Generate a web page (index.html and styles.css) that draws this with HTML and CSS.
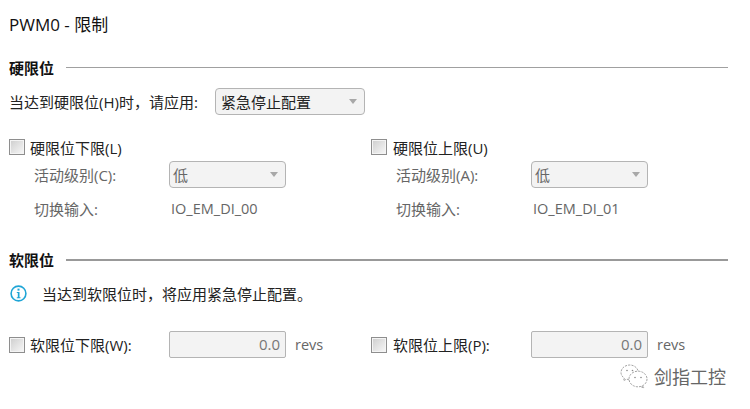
FILE: index.html
```html
<!DOCTYPE html>
<html lang="zh">
<head>
    <meta charset="UTF-8">
    <meta name="viewport" content="width=device-width, initial-scale=1.0">
    <title>PWM0 - 限制</title>
    <link rel="stylesheet" href="styles.css">
</head>
<body>

    <div class="container">
        <h1>PWM0 - 限制</h1>

        <div class="section-head">
            <h2>硬限位</h2>
            <div class="rule"></div>
        </div>
        <div class="apply-row">
            <span class="apply-label">当达到硬限位(H)时，请应用:</span>
            <div class="select select-wide"><span>紧急停止配置</span><i class="arrow"></i></div>
        </div>

        <div class="columns hard-limits">
            <div class="col">
                <div class="check-row"><span class="checkbox"></span><span>硬限位下限(L)</span></div>
                <div class="sub-row">
                    <span class="sub-label">活动级别(C):</span>
                    <div class="select select-small"><span>低</span><i class="arrow"></i></div>
                </div>
                <div class="sub-row switch-row">
                    <span class="sub-label">切换输入:</span>
                    <span class="value">IO_EM_DI_00</span>
                </div>
            </div>
            <div class="col">
                <div class="check-row"><span class="checkbox"></span><span>硬限位上限(U)</span></div>
                <div class="sub-row">
                    <span class="sub-label">活动级别(A):</span>
                    <div class="select select-small"><span>低</span><i class="arrow"></i></div>
                </div>
                <div class="sub-row switch-row">
                    <span class="sub-label">切换输入:</span>
                    <span class="value">IO_EM_DI_01</span>
                </div>
            </div>
        </div>

        <div class="section-head soft-head">
            <h2>软限位</h2>
            <div class="rule rule-thick"></div>
        </div>
        <div class="info-row">
            <svg class="info-icon" width="17" height="17" viewBox="0 0 17 17">
                <circle cx="8.5" cy="8.5" r="7.4" fill="#fff" stroke="#1fa5d6" stroke-width="1.6"/>
                <rect x="7.5" y="3.6" width="2" height="2" fill="#1fa5d6"/>
                <path d="M6.8 7h2.7v5.2h1v1H6.8v-1h1V8H6.8z" fill="#1fa5d6"/>
            </svg>
            <span>当达到软限位时，将应用紧急停止配置。</span>
        </div>

        <div class="columns soft-limits">
            <div class="col soft-col">
                <div class="check-row soft-check"><span class="checkbox"></span><span>软限位下限(W):</span></div>
                <div class="num-input">0.0</div>
                <span class="unit">revs</span>
            </div>
            <div class="col soft-col">
                <div class="check-row soft-check"><span class="checkbox"></span><span>软限位上限(P):</span></div>
                <div class="num-input">0.0</div>
                <span class="unit">revs</span>
            </div>
        </div>
    </div>

    <div class="watermark">
        <svg width="28" height="25" viewBox="0 0 28 25" fill="none" stroke="#999" stroke-width="0.9" stroke-dasharray="2.2 1.1">
            <path d="M18 6.5C16.8 3.2 13.6 1 9.8 1 5 1 1 4.3 1 8.4c0 2.4 1.3 4.4 3.3 5.8l-.8 2.5 3-1.5c.8.2 1.5.3 2.3.3"/>
            <ellipse cx="18" cy="15" rx="9" ry="7.8"/>
            <path d="M22.5 22l1.5 2-3.5-1.4"/>
            <circle cx="7" cy="6.5" r=".8" fill="#8a8a8a" stroke="none"/>
            <circle cx="12.5" cy="6.5" r=".8" fill="#8a8a8a" stroke="none"/>
            <circle cx="15" cy="13.5" r=".8" fill="#8a8a8a" stroke="none"/>
            <circle cx="21" cy="13.5" r=".8" fill="#8a8a8a" stroke="none"/>
        </svg>
        <span>剑指工控</span>
    </div>

</body>
</html>
```

FILE: styles.css
```css
* {
    box-sizing: border-box;
}

body {
    font-family: 'Open Sans', 'Noto Sans CJK SC', sans-serif;
    font-size: 15px;
    color: #222;
    background-color: #fff;
    margin: 0;
    padding: 0;
    width: 750px;
    height: 409px;
    overflow: hidden;
    position: relative;
}

.container {
    padding: 15px 22px 0 9px;
}

h1 {
    font-size: 17px;
    font-weight: 400;
    line-height: 20px;
    margin: 0;
    color: #111;
}

.section-head {
    display: flex;
    align-items: center;
    margin-top: 23px;
    height: 20px;
}

.section-head h2 {
    font-size: 15px;
    font-weight: 700;
    line-height: 20px;
    margin: 0 12px 0 0;
    color: #111;
}

.rule {
    flex: 1;
    height: 1px;
    margin-top: -1px;
    background-color: #a0a0a0;
}

.rule-thick {
    height: 2px;
    margin-top: 0;
    background-color: #999;
}

.apply-row {
    display: flex;
    align-items: center;
    margin-top: 10px;
    height: 27px;
}

.apply-label {
    width: 206px;
}

.select {
    display: flex;
    align-items: center;
    justify-content: space-between;
    height: 27px;
    border: 1px solid #b4b4b4;
    border-radius: 4px;
    background-color: #f3f3f3;
    padding: 0 6px 0 5px;
}

.select-wide {
    width: 150px;
}

.select-small {
    width: 117px;
    padding-left: 3px;
    color: #666;
}

.arrow {
    width: 0;
    height: 0;
    margin-right: 1px;
    border-left: 4px solid transparent;
    border-right: 4px solid transparent;
    border-top: 5px solid #a8a8a8;
}

.columns {
    display: grid;
    grid-template-columns: 362px 1fr;
}

.hard-limits {
    margin-top: 23px;
}

.check-row {
    display: flex;
    align-items: center;
    gap: 5px;
    height: 18px;
}

.col:last-child .check-row {
    gap: 6px;
}

.checkbox {
    flex: none;
    width: 16px;
    height: 16px;
    border: 1px solid #8e8e8e;
    background: linear-gradient(135deg, #cdcdcd, #f8f8f8);
    box-shadow: inset 0 0 0 1px #f4f4f4;
}

.sub-row {
    display: flex;
    align-items: center;
    height: 27px;
    margin-top: 5px;
    padding-left: 25px;
    color: #666;
}

.sub-label {
    width: 135px;
}

.switch-row {
    margin-top: 7px;
}

.value {
    padding-left: 2px;
    font-size: 14.5px;
}

.soft-head {
    margin-top: 28px;
}

.info-row {
    display: flex;
    align-items: center;
    gap: 15px;
    margin-top: 13px;
    height: 20px;
    padding-left: 1px;
}

.info-icon {
    flex: none;
}

.soft-limits {
    margin-top: 28px;
}

.soft-col {
    display: flex;
    align-items: center;
    height: 27px;
}

.soft-check {
    width: 160px;
}

.num-input {
    width: 117px;
    height: 27px;
    line-height: 25px;
    border: 1px solid #b4b4b4;
    border-radius: 2px;
    background-color: #f3f3f3;
    color: #777;
    text-align: right;
    padding-right: 5px;
}

.unit {
    margin-left: 9px;
    font-size: 14.5px;
    color: #666;
}

.watermark {
    position: absolute;
    left: 620px;
    top: 363px;
    display: flex;
    align-items: center;
    gap: 6px;
    font-size: 18px;
    color: #666;
}
```
